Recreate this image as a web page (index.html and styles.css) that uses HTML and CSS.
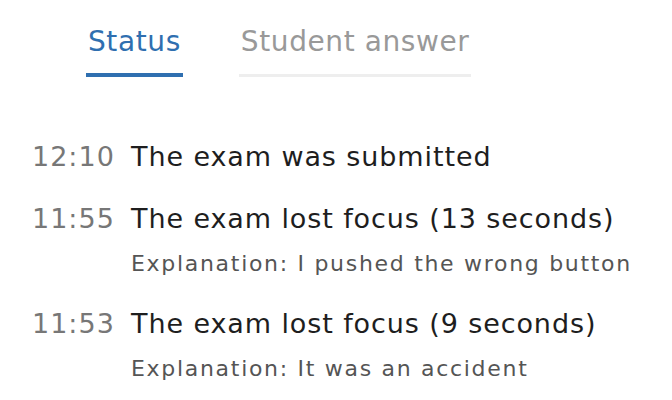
FILE: index.html
```html
<!DOCTYPE html>
<html lang="en">
<head>
    <meta charset="UTF-8">
    <title>Exam status</title>
    <link rel="stylesheet" href="styles.css">
</head>
<body>
    <div class="panel">
        <div class="tabs">
            <div class="tab active">Status</div>
            <div class="tab">Student answer</div>
        </div>

        <ul class="events">
            <li class="event">
                <span class="time">12:10</span>
                <div class="body">
                    <div class="title">The exam was submitted</div>
                </div>
            </li>
            <li class="event">
                <span class="time">11:55</span>
                <div class="body">
                    <div class="title">The exam lost focus (13 seconds)</div>
                    <div class="note">Explanation: I pushed the wrong button</div>
                </div>
            </li>
            <li class="event">
                <span class="time">11:53</span>
                <div class="body">
                    <div class="title">The exam lost focus (9 seconds)</div>
                    <div class="note">Explanation: It was an accident</div>
                </div>
            </li>
        </ul>
    </div>
</body>
</html>
```

FILE: styles.css
```css
body {
    margin: 0;
    background: #fff;
    font-family: "DejaVu Sans", "Noto Sans", sans-serif;
}

.panel {
    padding: 23px 0 0 32px;
}

.tabs {
    display: flex;
    gap: 56px;
    padding-left: 54px;
}

.tab {
    font-size: 28px;
    color: #999;
    padding: 2px 2px 15px;
    border-bottom: 3px solid #eee;
    letter-spacing: 0.6px;
}

.tab.active {
    color: #2f6fb0;
    border-bottom: 4px solid #2f6fb0;
}

.events {
    list-style: none;
    margin: 0;
    padding: 0;
    margin-top: 62px;
}

.event {
    display: flex;
    gap: 16px;
    margin-bottom: 26px;
}

.time {
    width: 83px;
    font-size: 27px;
    color: #777;
    line-height: 36px;
    letter-spacing: 1px;
}

.title {
    font-size: 27px;
    color: #1e1e1e;
    line-height: 36px;
    letter-spacing: 0.9px;
}

.note {
    font-size: 22px;
    color: #555;
    line-height: 32px;
    margin-top: 11px;
    letter-spacing: 1.7px;
}
```
